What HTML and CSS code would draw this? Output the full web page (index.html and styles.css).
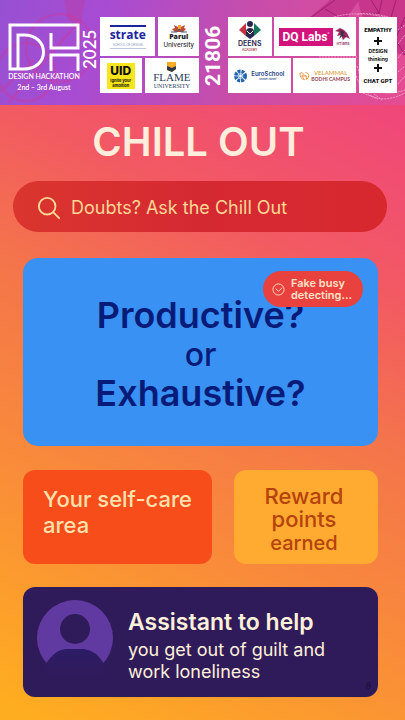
FILE: index.html
```html
<!DOCTYPE html>
<html lang="en">
<head>
<meta charset="utf-8">
<meta name="viewport" content="width=device-width, initial-scale=1">
<title>Chill Out</title>
<link rel="stylesheet" href="styles.css">
</head>
<body>
<header class="banner">
  <svg class="banner-art" viewBox="0 0 405 105" preserveAspectRatio="xMaxYMid slice" aria-hidden="true">
    <g fill="none" stroke="#d8358f" stroke-width="2" opacity=".4">
      <circle cx="26" cy="72" r="29"/><circle cx="60" cy="48" r="34"/><path d="M0 92 34 60M8 103 80 20M62 14C76 16 85 28 78 45"/>
    </g>
    <path d="M64 0h21l-5 28-12-8z" fill="#c03a9c" opacity=".4"/>
    <path d="M309 18 330 0h29l-12 18zM358 0h47v56c-25-8-42-27-47-56z" fill="#b5207c" opacity=".5"/>
    <g fill="none" stroke="#861260" stroke-width="1" opacity=".6">
      <path d="M371 0 405 55M379 13l3-13M388 28l8-28M395 40l10-23M379 13l-15 1M388 28l-16 1M395 40l-10 3M310 18l25-18M325 9l12 7"/>
    </g>
    <g fill="none" stroke="#ffc3df" stroke-width="1" stroke-dasharray="2 1" opacity=".65">
      <path d="M334 17c16-5 39-4 61 3M357 15c4-3 23-2 39 5M357 57h-38M356 76c9 24 27 28 49 17M357 66c7 24 25 32 48 24M398 30l7-5M398 44l7-9M398 58l7-8M398 72l7-6M398 84l7-8M374 94l8 6M360 92l18 7"/>
    </g>
  </svg>
  <div class="event">
    <svg class="event-logo" viewBox="0 0 72 48" role="img" aria-label="DH">
      <path d="M43 10V25H70V2H2V46H16C42 46 42 12 16 12H10V46M43 48V32H70V48" fill="none" stroke="#fff" stroke-width="3"/>
    </svg>
    <span class="event-name">DESIGN HACKATHON</span>
    <span class="event-date">2nd – 3rd August</span>
  </div>
  <span class="vertical year">2025</span>
  <div class="tiles schools">
    <div class="tile strate"><b>strate</b><small>SCHOOL OF DESIGN</small></div>
    <div class="tile parul">
      <svg viewBox="0 0 18 9" aria-hidden="true"><path d="M5 8 2 5l3-1-1-3 4 2 2-2 1 2 4-2-1 3 2 1-3 3z" fill="#b74e35"/><path d="M1 8h6l2-3 2 3h6" fill="none" stroke="#555879"/><path d="M8 1h3v4H8z" fill="#f4a13a"/></svg>
      <b>Parul</b><span>University</span>
    </div>
    <div class="tile uid"><div><b>UID</b><span>ignite your<br>ambition</span></div></div>
    <div class="tile flame">
      <svg viewBox="0 0 9 10" aria-hidden="true"><path d="M0 0h9v7L5 10 0 8z" fill="#f9a91e"/><path d="M0 4 5 6 9 4v3L5 10 0 8z" fill="#30364a"/><path d="m0 4 5-3 3-1-2 4z" fill="#f4b23b"/></svg>
      <b>FLAME</b><span>UNIVERSITY</span>
    </div>
  </div>
  <span class="vertical code">21806</span>
  <div class="tiles partners">
    <div class="tile deens">
      <svg viewBox="0 0 24 19" aria-hidden="true"><path d="M8 3v13L1 10z" fill="#c23442"/><path d="M16 3v13l7-6z" fill="#16765a"/><path d="M12 8q4 0 4 4v4l-4 3-4-3v-4q0-4 4-4z" fill="#29274e"/><circle cx="12" cy="4" r="3" fill="#29274e"/><path d="m9 11 3 3 3-3" stroke="#fff" fill="none"/></svg>
      <b>DEENS</b><span>ACADEMY</span>
    </div>
    <div class="tile dq">
      <b>DQ Labs<sup>°</sup></b>
      <div class="iit"><svg viewBox="0 0 16 13" aria-hidden="true"><path d="M0 3 5 0l4 2 3 3 3 6-4-2-3 3-2-5-4 1 2-4z" fill="#9d275f"/><path d="m5 2 4 2-1 3 5 2-6-1-3 3 2-5z" fill="#393347"/></svg><span>IITians</span></div>
    </div>
    <div class="tile euro">
      <svg viewBox="0 0 14 14" aria-hidden="true"><circle cx="7" cy="7" r="5" fill="none" stroke="#2463aa" stroke-width="4" stroke-dasharray="3 1"/><circle cx="7" cy="7" r="2" fill="#fff" stroke="#5598d0"/></svg>
      <div><b>EuroSchool</b><span>Discover Yourself</span></div>
    </div>
    <div class="tile velammal">
      <svg viewBox="0 0 12 12" aria-hidden="true"><path d="M1 3q3-2 4 1l-2 2 3 4Q1 9 1 3M7 2q5 1 3 6l-2 2V6L6 5M3 6h5" fill="none" stroke="#ef913e" stroke-width="1"/></svg>
      <div><b>VELAMMAL</b><span>BODHI CAMPUS</span></div>
    </div>
  </div>
  <div class="tile theme">
    <b>EMPATHY</b>
    <svg viewBox="0 0 8 8" role="img" aria-label="plus"><path d="M4 0v8M0 4h8"/></svg>
    <span>DESIGN</span><span>thinking</span>
    <svg viewBox="0 0 8 8" role="img" aria-label="plus"><path d="M4 0v8M0 4h8"/></svg>
    <b>CHAT GPT</b>
  </div>
</header>
<main class="screen">
  <h1>CHILL OUT</h1>
  <label class="search">
    <svg viewBox="0 0 26 26" aria-hidden="true"><circle cx="11" cy="11" r="9"/><path d="m18 18 6 6"/></svg>
    <input type="search" aria-label="Doubts? Ask the Chill Out" placeholder="Doubts? Ask the Chill Out">
  </label>
  <div class="cards">
    <section class="card question">
      <h2>Productive?<br><span>or</span><br>Exhaustive?</h2>
      <div class="status">
        <svg viewBox="0 0 14 14" aria-hidden="true"><circle cx="7" cy="7" r="6"/><path d="m4 6 3 3 4-4"/></svg>
        <span>Fake busy<br>detecting...</span>
      </div>
    </section>
    <section class="card care"><h3>Your self-care area</h3></section>
    <section class="card reward"><h3>Reward<br>points<br><span>earned</span></h3></section>
    <section class="card assistant">
      <svg class="avatar" viewBox="0 0 78 78" aria-hidden="true">
        <defs><linearGradient id="body" x1="0" y1="0" x2="0" y2="1"><stop offset="0" stop-color="#2c1b66"/><stop offset="1" stop-color="#301b5a"/></linearGradient></defs>
        <circle cx="39" cy="39" r="38" fill="#603aa0"/><circle cx="39" cy="30" r="15" fill="#301b5a"/><path d="M9 66Q19 50 31 50H48Q60 51 69 66V78H9Z" fill="url(#body)"/>
      </svg>
      <div><h3>Assistant to help</h3><p>you get out of guilt and work loneliness</p></div>
      <span class="mark">8</span>
    </section>
  </div>
</main>
</body>
</html>
```
FILE: styles.css
```css
* { box-sizing: border-box; }
h1, h2, h3, p { margin: 0; }
body {
  margin: 0;
  min-height: 100vh;
  background: linear-gradient(206deg, #ef437f 8%, #f25a62 33%, #f4754a 50%, #f98b3a 71%, #ffad20 98%);
  font-family: Inter, "Liberation Sans", sans-serif;
}
.banner {
  position: relative;
  display: flex;
  align-items: flex-start;
  height: 105px;
  padding: 17px 8px 12px;
  background: linear-gradient(110deg, #9750d2 0%, #a84cd2 25%, #c74daa 58%, #e54c91 100%);
  overflow: hidden;
}
.banner-art { position: absolute; inset: 0; width: 100%; height: 100%; }
.banner > :not(.banner-art) { position: relative; }
.event { display: flex; flex-direction: column; align-items: center; width: 72px; padding-top: 6px; color: #fff; white-space: nowrap; }
.event-logo { width: 72px; height: 48px; }
.event-name { font: 600 7px/11px Lato, sans-serif; }
.event-date { font: 600 7px/11px Lato, sans-serif; }
.vertical { writing-mode: vertical-rl; transform: rotate(180deg); color: #fff; text-align: center; }
.year { width: 20px; height: 64px; font: 600 17px/20px Lato, sans-serif; }
.code { width: 29px; height: 78px; font: 700 21px/29px Roboto, sans-serif; }
.tiles { display: grid; row-gap: 2px; height: 76px; }
.schools { flex: 99; grid-template: 39px 35px / repeat(100, minmax(0, 1fr)); }
.partners { flex: 128; grid-template: 39px 35px / repeat(100, minmax(0, 1fr)); margin-right: 3px; }
.tile { display: flex; flex-direction: column; align-items: center; justify-content: center; min-width: 0; background: #fff; white-space: nowrap; }
.strate { grid-column: 1 / 57; color: #1b249b; }
.strate b { border-top: 2px solid #1b249b; font: 700 12px/15px "Open Sans", sans-serif; }
.strate small { width: 36px; border-bottom: 1px solid #bec8e2; color: #8394ba; font: 400 3px/6px "Liberation Sans", sans-serif; text-align: center; }
.parul { grid-column: 60 / 101; color: #222; }
.parul svg { width: 18px; height: 9px; }
.parul b { font: 800 7px/8px "Open Sans", sans-serif; }
.parul span { font: 400 7px/8px Roboto, sans-serif; }
.uid { grid-column: 1 / 43; }
.uid div { display: flex; flex-direction: column; align-items: center; width: 28px; height: 26px; background: #f8e51b; color: #111; }
.uid b { font: 800 12px/15px Inter, sans-serif; }
.uid span { font: 700 4px/5px Inter, sans-serif; text-align: center; }
.flame { grid-column: 46 / 101; color: #243b59; }
.flame svg { width: 9px; height: 10px; }
.flame b { font: 400 11px/11px "Liberation Serif", serif; }
.flame span { font: 400 6px/6px "Liberation Serif", serif; }
.deens { grid-column: 1 / 35; color: #25244c; }
.deens svg { width: 24px; height: 19px; }
.deens b { font: 600 7px/9px Inter, sans-serif; }
.deens span { color: #a73649; font: 600 3px/5px Inter, sans-serif; }
.dq { grid-column: 37 / 101; flex-direction: row; gap: 2px; }
.dq b { width: 54px; background: #d4147d; color: #fff; font: 700 12px/18px Roboto, sans-serif; text-align: center; }
.dq sup { font-size: 6px; line-height: 0; }
.iit { display: flex; flex-direction: column; align-items: center; color: #8b285c; font: 600 4px/5px Inter, sans-serif; }
.iit svg { width: 16px; height: 13px; }
.euro { grid-column: 1 / 50; flex-direction: row; gap: 4px; color: #234482; }
.euro svg { width: 13px; height: 14px; }
.euro div, .velammal div { display: flex; flex-direction: column; align-items: center; }
.euro b { font: 600 6px/8px Inter, sans-serif; }
.euro span { font: 600 2px/3px Inter, sans-serif; }
.velammal { grid-column: 52 / 101; flex-direction: row; gap: 1px; }
.velammal svg { width: 11px; height: 12px; }
.velammal b { color: #dfa03e; font: 600 6px/6px Lato, sans-serif; }
.velammal span { color: #963d50; font: 700 5px/6px Lato, sans-serif; }
.theme { width: 38px; height: 76px; gap: 1px; color: #111; text-align: center; }
.theme b { font: 900 6px/12px Roboto, sans-serif; }
.theme span { font: 700 5px/7px Inter, sans-serif; }
.theme svg { width: 8px; height: 8px; margin-bottom: 2px; stroke: currentColor; stroke-width: 2; }
.screen { padding-bottom: 23px; }
h1 { padding: 16px 8px 0 0; color: #ffeedb; text-align: center; font-size: 40px; line-height: 42px; font-weight: 600; }
.search { display: flex; align-items: center; gap: 10px; height: 51px; margin: 18px 18px 26px 13px; padding: 2px 24px 0; border-radius: 26px; background: linear-gradient(90deg, #da352e, #d52932 50%, #d7282e); color: #ffd795; }
.search svg { flex: none; width: 24px; height: 26px; fill: none; stroke: currentColor; stroke-width: 2; stroke-linecap: round; }
.search input { flex: 1; min-width: 0; padding: 0; border: 0; outline: 0; background: transparent; color: inherit; font: 400 18px/28px Inter, sans-serif; }
.search input::placeholder { color: inherit; opacity: 1; }
.cards { display: grid; grid-template-columns: 189fr 144fr; column-gap: 22px; padding: 0 27px 0 23px; }
.card { border-radius: 12px; }
.question { position: relative; grid-column: 1 / 3; height: 188px; margin-bottom: 24px; padding-top: 38px; border-radius: 15px; background: #3991f3; text-align: center; }
.question h2 { color: #071b79; font-size: 36px; line-height: 38px; font-weight: 600; }
.question h2 span { font-size: 32px; font-weight: 500; }
.status { position: absolute; top: 13px; right: 15px; display: flex; align-items: center; gap: 6px; width: 100px; height: 36px; padding-left: 9px; border-radius: 18px; background: #e9413d; color: #ffe1ca; font-size: 11px; line-height: 12px; font-weight: 600; text-align: left; white-space: nowrap; }
.status svg { flex: none; width: 13px; height: 13px; fill: none; stroke: currentColor; }
.care { height: 94px; padding: 16px 18px 0 20px; background: #f64d1a; color: #ffe1ae; }
.care h3 { font-size: 22px; line-height: 26px; font-weight: 500; }
.reward { height: 94px; padding: 15px 4px 0 0; background: #ffaa30; color: #b6420e; text-align: center; }
.reward h3 { font-size: 22px; line-height: 23px; font-weight: 500; }
.reward span { font-size: 20px; }
.assistant { position: relative; grid-column: 1 / 3; display: flex; gap: 14px; height: 110px; margin-top: 23px; padding: 12px 16px 0 13px; background: #301b5a; color: #fff0d9; }
.avatar { flex: none; width: 78px; height: 78px; }
.assistant h3 { padding-top: 8px; font-size: 23px; line-height: 30px; font-weight: 600; }
.assistant p { padding-top: 2px; font-size: 18px; line-height: 22px; }
.mark { position: absolute; right: 7px; bottom: 5px; color: #190c3a; font-size: 9px; line-height: 12px; }
```
